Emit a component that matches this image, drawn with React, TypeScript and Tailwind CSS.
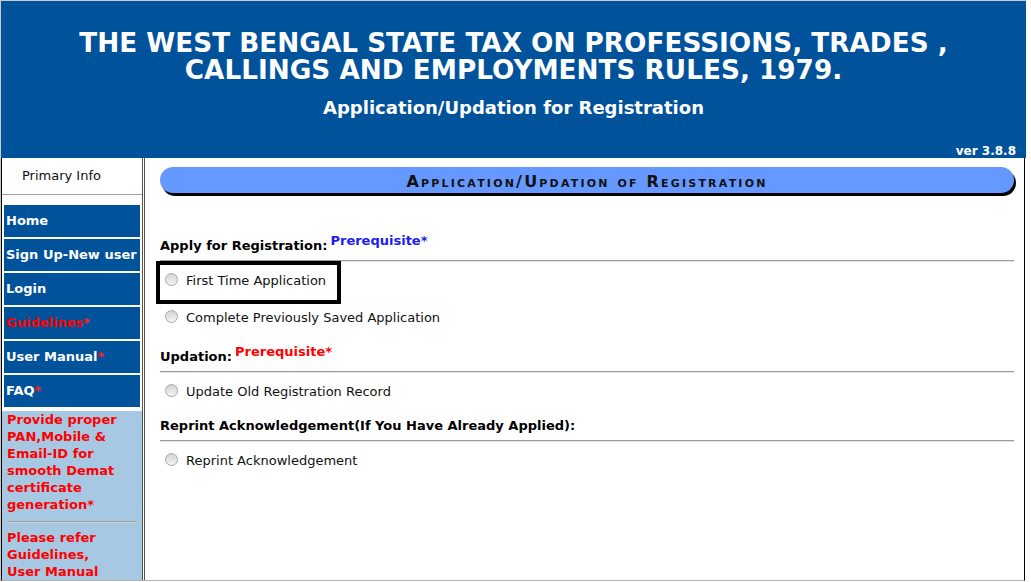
import React from "react";

const menu = [
  { label: "Home" },
  { label: "Sign Up-New user" },
  { label: "Login" },
  { label: "Guidelines", red: true, star: true },
  { label: "User Manual", star: true },
  { label: "FAQ", star: true },
];

function Radio() {
  return (
    <span className="ml-[5px] mr-[8px] inline-block h-[13px] w-[13px] shrink-0 -translate-y-[1px] rounded-full border border-[#a9a9a9] bg-gradient-to-b from-[#d4d4d4] to-[#f4f4f4]" />
  );
}

function Option({ label, boxed }: { label: string; boxed?: boolean }) {
  return (
    <div className="relative flex h-[37px] items-center text-[13px] text-[#111]">
      <Radio />
      <span>{label}</span>
      {boxed && (
        <div className="absolute -left-[4px] -top-[1px] h-[43px] w-[185px] border-4 border-black" />
      )}
    </div>
  );
}

function Heading({
  label,
  prereq,
  color,
  mt,
}: {
  label: string;
  prereq?: boolean;
  color?: string;
  mt: string;
}) {
  return (
    <div className={`flex items-start ${mt}`}>
      <span className="mt-[5px] text-[13px] leading-4 font-bold text-black">{label}</span>
      {prereq && (
        <span className={`ml-[3px] text-[13px] leading-4 font-bold ${color}`}>Prerequisite*</span>
      )}
    </div>
  );
}

function Rule() {
  return <div className="mt-[6px] border-t border-b border-t-[#9a9a9a] border-b-[#e6e6e6]" />;
}

export default function App() {
  return (
    <div className="h-[582px] w-[1031px] overflow-hidden bg-white font-['DejaVu_Sans',sans-serif]">
      <div className="w-[1026px] border-t border-l border-[#c9c9c9]">
        {/* Header */}
        <div className="relative flex h-[157px] flex-col items-center bg-[#00529b] text-white">
          <h1 className="mt-[29px] text-center text-[26.3px] leading-[27px] font-bold">
            THE WEST BENGAL STATE TAX ON PROFESSIONS, TRADES ,<br />
            CALLINGS AND EMPLOYMENTS RULES, 1979.
          </h1>
          <h2 className="mt-[12px] text-[18px] leading-6 font-bold">
            Application/Updation for Registration
          </h2>
          <span className="absolute right-[10px] bottom-0 text-[12px] leading-[13px] font-bold">
            ver 3.8.8
          </span>
        </div>

        {/* Body */}
        <div className="flex h-[423px] w-[1024px] border-r border-b border-l border-r-black border-b-[#b4b4b4] border-l-black">
          {/* Sidebar */}
          <aside className="flex w-[143px] shrink-0 flex-col border-r-[3px] border-double border-r-[#5b513c]">
            <div className="flex h-[37px] items-center border-b border-[#a0a0a0] pl-[20px] text-[13px] text-[#111]">
              Primary Info
            </div>
            <div className="flex flex-col gap-[2px] px-[2px] pt-[10px] pb-[4px]">
              {menu.map((m) => (
                <div
                  key={m.label}
                  className={`flex h-[32px] items-center bg-[#00529b] pl-[2px] text-[13px] font-bold ${
                    m.red ? "text-[#ff0000]" : "text-white"
                  }`}
                >
                  {m.label}
                  {m.star && <span className="text-[#ff2020]">*</span>}
                </div>
              ))}
            </div>
            <div className="flex-1 bg-[#a6c8e2] px-[5px] text-[13px] leading-[17px] font-bold text-[#ff0000]">
              <p>
                Provide proper PAN,Mobile &amp; Email-ID for smooth Demat certificate generation*
              </p>
              <div className="mt-[8px] mb-[6px] border-t border-b border-t-[#a0a0a0] border-b-[#d0d0d0]" />
              <p>
                Please refer
                <br />
                Guidelines,
                <br />
                User Manual
              </p>
            </div>
          </aside>

          {/* Content */}
          <main className="flex-1 pt-[9px] pr-[10px] pl-[15px]">
            <div className="flex h-[26px] items-center justify-center rounded-full bg-[#6699ff] pt-[3px] text-[16px] font-bold tracking-[2.2px] text-[#111] [font-variant:small-caps] shadow-[2px_3px_0_#000]">
              Application/Updation of Registration
            </div>

            <Heading label="Apply for Registration:" prereq color="text-[#1c1cf5]" mt="mt-[40px]" />
            <Rule />
            <Option label="First Time Application" boxed />
            <Option label="Complete Previously Saved Application" />

            <Heading label="Updation:" prereq color="text-[#ff0000]" mt="mt-[8px]" />
            <Rule />
            <Option label="Update Old Registration Record" />

            <Heading label="Reprint Acknowledgement(If You Have Already Applied):" mt="mt-[3px]" />
            <Rule />
            <Option label="Reprint Acknowledgement" />
          </main>
        </div>
      </div>
    </div>
  );
}
